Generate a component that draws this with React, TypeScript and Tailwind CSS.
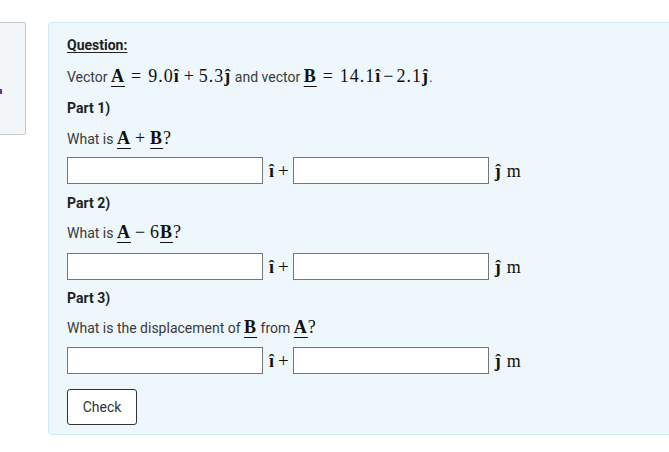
import React from 'react';

const serif = { fontFamily: '"Liberation Serif", "DejaVu Serif", serif' };

function Vec({ children }: { children: React.ReactNode }) {
  return (
    <span className="font-bold underline decoration-1 underline-offset-[4px]">{children}</span>
  );
}

function M({ children }: { children: React.ReactNode }) {
  return (
    <span className="text-[18px] leading-none tracking-[1px] text-[#111]" style={serif}>
      {children}
    </span>
  );
}

// binary operator / relation with KaTeX-like spacing
function Op({ children, wide }: { children: React.ReactNode; wide?: boolean }) {
  return <span className={wide ? 'mx-[6px]' : 'mx-[4px]'}>{children}</span>;
}

function AnswerRow({ mt }: { mt: string }) {
  return (
    <div className={`flex items-center ${mt}`}>
      <input className="w-[196px] h-[27px] bg-white border border-[#767676] outline-none" />
      <span className="ml-[6px] text-[18px] leading-none text-[#111] font-bold" style={serif}>î</span>
      <span className="ml-[4px] mr-[4px] text-[19px] leading-none text-[#111]" style={serif}>+</span>
      <input className="w-[196px] h-[27px] bg-white border border-[#767676] outline-none" />
      <span className="ml-[6px] text-[18px] leading-none text-[#111] font-bold" style={serif}>ĵ</span>
      <span className="ml-[6px] text-[18px] leading-none text-[#111]" style={serif}>m</span>
    </div>
  );
}

export default function App() {
  return (
    <div
      className="w-[669px] h-[452px] overflow-hidden bg-white text-[14px] text-[#3a3a3a]"
      style={{ fontFamily: 'Roboto, "Liberation Sans", sans-serif' }}
    >
      <div className="flex items-start pt-[22px] gap-[22px]">
        {/* side card, cut at the left edge */}
        <div className="relative w-[26px] h-[113px] shrink-0 bg-[#f3f6f9] border-y border-r border-[#c3c8cd] rounded-r-[2px]">
          <div className="absolute left-0 top-[66px] w-[2px] h-[5px] bg-[#6b2fa0]" />
        </div>

        <div className="w-[640px] shrink-0 bg-[#eef7fb] border border-[#cfeaf4] rounded-[4px] pl-[18px] pt-[12px] pb-[9px]">
          <p className="leading-5 font-bold underline underline-offset-2 text-[#222]">Question:</p>

          <p className="leading-5 mt-[12px]">
            Vector{' '}
            <M>
              <Vec>A</Vec>
              <Op wide>=</Op>9.0<b>î</b>
              <Op>+</Op>5.3<b>ĵ</b>
            </M>{' '}
            and vector{' '}
            <M>
              <Vec>B</Vec>
              <Op wide>=</Op>14.1<b>î</b>
              <span className="mx-[2px]">−</span>2.1<b>ĵ</b>
            </M>
            .
          </p>

          <p className="leading-5 mt-[11px] font-bold text-[#222]">Part 1)</p>
          <p className="leading-5 mt-[11px]">
            What is{' '}
            <M>
              <Vec>A</Vec>
              <Op>+</Op>
              <Vec>B</Vec>?
            </M>
          </p>
          <AnswerRow mt="mt-[8px]" />

          <p className="leading-5 mt-[9px] font-bold text-[#222]">Part 2)</p>
          <p className="leading-5 mt-[10px]">
            What is{' '}
            <M>
              <Vec>A</Vec>
              <Op>−</Op>6<Vec>B</Vec>?
            </M>
          </p>
          <AnswerRow mt="mt-[10px]" />

          <p className="leading-5 mt-[8px] font-bold text-[#222]">Part 3)</p>
          <p className="leading-5 mt-[10px]">
            What is the displacement of{' '}
            <M>
              <Vec>B</Vec>
            </M>{' '}
            from{' '}
            <M>
              <Vec>A</Vec>?
            </M>
          </p>
          <AnswerRow mt="mt-[9px]" />

          <button className="mt-[15px] w-[70px] h-[36px] bg-white border border-[#333] rounded-[3px] text-[14px] text-[#333]">
            Check
          </button>
        </div>
      </div>
    </div>
  );
}
